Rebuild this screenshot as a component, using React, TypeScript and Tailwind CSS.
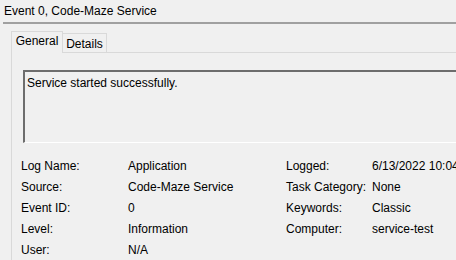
export default function App() {
  const left = [
    ["Log Name:", "Application"],
    ["Source:", "Code-Maze Service"],
    ["Event ID:", "0"],
    ["Level:", "Information"],
    ["User:", "N/A"],
  ];
  const right = [
    ["Logged:", "6/13/2022 10:04:51 AM"],
    ["Task Category:", "None"],
    ["Keywords:", "Classic"],
    ["Computer:", "service-test"],
  ];

  return (
    <div
      className="w-[456px] h-[260px] overflow-hidden bg-[#f0f0f0] text-black text-[12px] leading-none"
      style={{ fontFamily: '"Liberation Sans", Arial, sans-serif' }}
    >
      {/* Title */}
      <div className="h-[22px] pl-[4px] flex items-center">Event 0, Code-Maze Service</div>
      <div className="ml-[3px] h-[2px] bg-[#a0a0a0]" />

      {/* Tabs */}
      <div className="ml-[11px] mt-[6px] flex items-end h-[22px]">
        <div className="w-[52px] h-[22px] shrink-0 bg-[#f0f0f0] border border-b-0 border-[#d9d9d9] flex items-center justify-center pb-[4px] relative z-10 -mb-px">
          General
        </div>
        <div className="w-[44px] h-[19px] shrink-0 border border-l-0 border-b-0 border-[#d9d9d9] bg-[#f0f0f0] flex items-center justify-center pt-[1px]">
          Details
        </div>
      </div>

      {/* Panel */}
      <div className="ml-[11px] border-t border-l border-[#d9d9d9] h-[210px] pt-[17px]">
        <div className="ml-[11px] w-[480px] h-[73px] border-t-2 border-l-2 border-t-[#6d6d6d] border-l-[#6d6d6d] border-b border-b-white px-[2px] pt-[5px]">
          Service started successfully.
        </div>

        <div className="mt-[12px] flex">
          <div className="ml-[9px] w-[107px] shrink-0 flex flex-col">
            {left.map(([k]) => (
              <div key={k} className="h-[21px] flex items-center">{k}</div>
            ))}
          </div>
          <div className="w-[158px] shrink-0 flex flex-col">
            {left.map(([k, v]) => (
              <div key={k} className="h-[21px] flex items-center whitespace-nowrap">{v}</div>
            ))}
          </div>
          <div className="w-[86px] shrink-0 flex flex-col">
            {right.map(([k]) => (
              <div key={k} className="h-[21px] flex items-center whitespace-nowrap">{k}</div>
            ))}
          </div>
          <div className="shrink-0 flex flex-col">
            {right.map(([k, v]) => (
              <div key={k} className="h-[21px] flex items-center whitespace-nowrap">{v}</div>
            ))}
          </div>
        </div>
      </div>
    </div>
  );
}
